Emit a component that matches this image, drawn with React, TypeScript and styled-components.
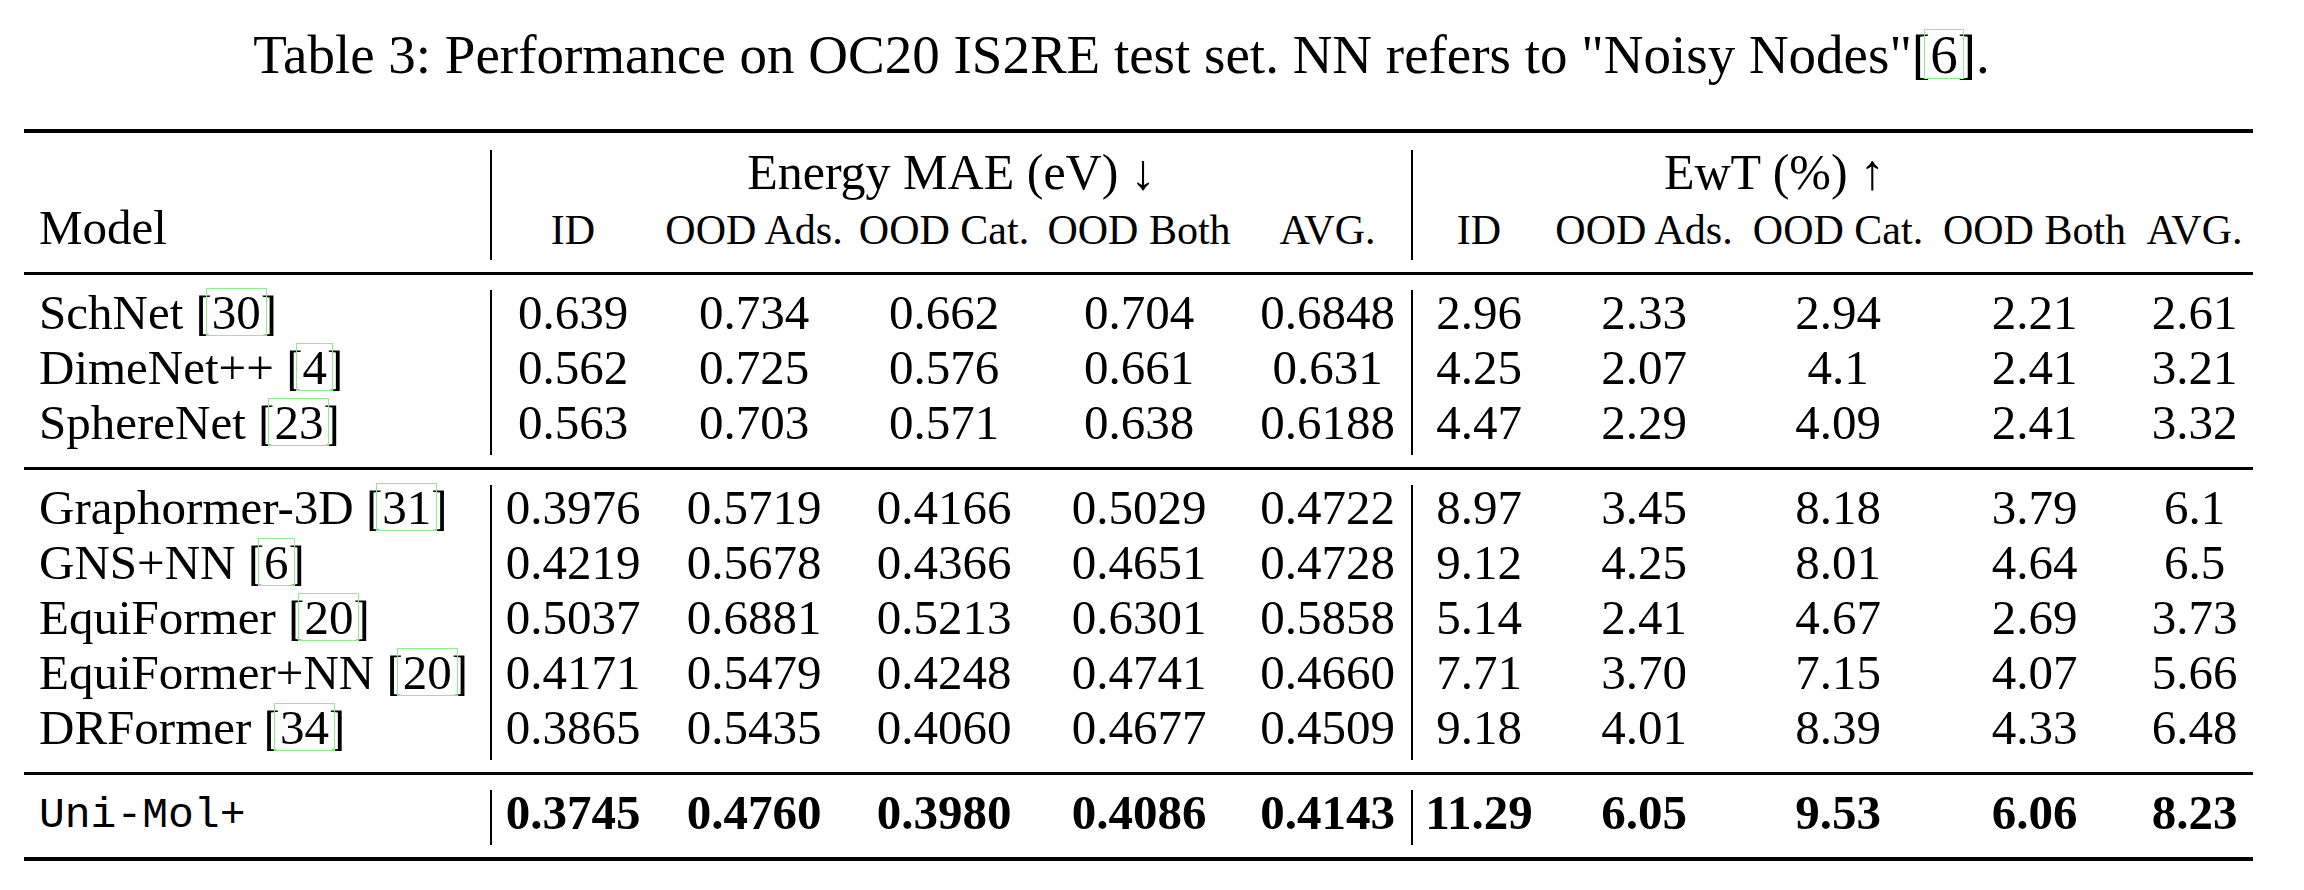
import React from 'react';
import styled, { createGlobalStyle, css } from 'styled-components';

const GlobalStyle = createGlobalStyle`
  html, body {
    margin: 0;
    padding: 0;
    background: #ffffff;
  }
  body {
    font-family: 'Liberation Serif', 'Times New Roman', serif;
    color: #000;
  }
`;

// column widths measured from the screenshot (model | energy x5 | ewt x5)
const COLUMNS = '466px 164px 200px 180px 210px 167px 134px 198px 190px 203px 117px';

const Page = styled.div`
  width: 2304px;
  height: 890px;
  overflow: hidden;
`;

const Caption = styled.div`
  width: 2229px;
  margin-left: 24px;
  padding: 27px 34px 0 0;
  box-sizing: border-box;
  font-size: 55px;
  line-height: 55px;
  text-align: center;
  white-space: nowrap;
`;

const Table = styled.div`
  width: 2229px;
  margin: 47px 0 0 24px;
`;

const Rule = styled.div<{ $heavy?: boolean }>`
  height: ${p => (p.$heavy ? '4px' : '3px')};
  background: #000;
`;

const Section = styled.div`
  padding: 15px 0 12px;
`;

const HeaderSection = styled(Section)`
  padding-top: 17px;
`;

const Grid = styled.div`
  display: grid;
  grid-template-columns: ${COLUMNS};
  grid-auto-rows: 55px;
`;

const Cell = styled.div<{
  $left?: boolean;
  $divider?: boolean;
  $bold?: boolean;
  $small?: boolean;
  $group?: boolean;
  $span?: number;
  $mono?: boolean;
}>`
  box-sizing: border-box;
  height: 55px;
  font-size: 49px;
  line-height: 45px;
  padding-bottom: 10px;
  white-space: nowrap;
  text-align: ${p => (p.$left ? 'left' : 'center')};
  padding-left: ${p => (p.$left ? '15px' : '0')};
  font-weight: ${p => (p.$bold ? 700 : 400)};
  ${p => p.$divider && css`border-left: 2px solid #000;`}
  ${p => p.$span && css`grid-column: span ${p.$span};`}
  ${p => p.$group && css`font-size: 50px;`}
  ${p =>
    p.$small &&
    css`
      font-size: 42px;
      padding-top: 3px;
      padding-bottom: 7px;
    `}
  ${p =>
    p.$mono &&
    css`
      font-family: 'Liberation Mono', 'Courier New', monospace;
      font-size: 43px;
      padding-top: 3px;
      padding-bottom: 7px;
    `}
`;

const CiteLink = styled.span<{ $caption?: boolean }>`
  position: relative;

  &::after {
    content: '';
    position: absolute;
    left: -6px;
    right: -6px;
    top: ${p => (p.$caption ? '5px' : '3px')};
    bottom: ${p => (p.$caption ? '6px' : '4px')};
    border: 1px solid #8fec8f;
    pointer-events: none;
  }
`;

type Row = {
  model: string;
  cite?: string;
  energy: string[];
  ewt: string[];
};

const baselines: Row[] = [
  { model: 'SchNet', cite: '30', energy: ['0.639', '0.734', '0.662', '0.704', '0.6848'], ewt: ['2.96', '2.33', '2.94', '2.21', '2.61'] },
  { model: 'DimeNet++', cite: '4', energy: ['0.562', '0.725', '0.576', '0.661', '0.631'], ewt: ['4.25', '2.07', '4.1', '2.41', '3.21'] },
  { model: 'SphereNet', cite: '23', energy: ['0.563', '0.703', '0.571', '0.638', '0.6188'], ewt: ['4.47', '2.29', '4.09', '2.41', '3.32'] },
];

const transformers: Row[] = [
  { model: 'Graphormer-3D', cite: '31', energy: ['0.3976', '0.5719', '0.4166', '0.5029', '0.4722'], ewt: ['8.97', '3.45', '8.18', '3.79', '6.1'] },
  { model: 'GNS+NN', cite: '6', energy: ['0.4219', '0.5678', '0.4366', '0.4651', '0.4728'], ewt: ['9.12', '4.25', '8.01', '4.64', '6.5'] },
  { model: 'EquiFormer', cite: '20', energy: ['0.5037', '0.6881', '0.5213', '0.6301', '0.5858'], ewt: ['5.14', '2.41', '4.67', '2.69', '3.73'] },
  { model: 'EquiFormer+NN', cite: '20', energy: ['0.4171', '0.5479', '0.4248', '0.4741', '0.4660'], ewt: ['7.71', '3.70', '7.15', '4.07', '5.66'] },
  { model: 'DRFormer', cite: '34', energy: ['0.3865', '0.5435', '0.4060', '0.4677', '0.4509'], ewt: ['9.18', '4.01', '8.39', '4.33', '6.48'] },
];

const ours: Row = {
  model: 'Uni-Mol+',
  energy: ['0.3745', '0.4760', '0.3980', '0.4086', '0.4143'],
  ewt: ['11.29', '6.05', '9.53', '6.06', '8.23'],
};

const subHeaders = ['ID', 'OOD Ads.', 'OOD Cat.', 'OOD Both', 'AVG.'];

const DataRow: React.FC<{ row: Row; bold?: boolean; mono?: boolean }> = ({ row, bold, mono }) => (
  <>
    <Cell $left $mono={mono}>
      {row.model}
      {row.cite && (
        <>
          {' '}[<CiteLink>{row.cite}</CiteLink>]
        </>
      )}
    </Cell>
    {row.energy.map((v, i) => (
      <Cell key={'e' + i} $divider={i === 0} $bold={bold}>
        {v}
      </Cell>
    ))}
    {row.ewt.map((v, i) => (
      <Cell key={'w' + i} $divider={i === 0} $bold={bold}>
        {v}
      </Cell>
    ))}
  </>
);

const App: React.FC = () => {
  return (
    <Page>
      <GlobalStyle />
      <Caption>
        Table 3: Performance on OC20 IS2RE test set. NN refers to "Noisy Nodes"[<CiteLink $caption>6</CiteLink>].
      </Caption>

      <Table>
        <Rule $heavy />
        <HeaderSection>
          <Grid>
            <Cell />
            <Cell $span={5} $divider $group>
              Energy MAE (eV) ↓
            </Cell>
            <Cell $span={4} $divider $group>
              EwT (%) ↑
            </Cell>
            <Cell />

            <Cell $left>Model</Cell>
            {subHeaders.map((h, i) => (
              <Cell key={'eh' + i} $small $divider={i === 0}>
                {h}
              </Cell>
            ))}
            {subHeaders.map((h, i) => (
              <Cell key={'wh' + i} $small $divider={i === 0}>
                {h}
              </Cell>
            ))}
          </Grid>
        </HeaderSection>
        <Rule />

        <Section>
          <Grid>
            {baselines.map(r => (
              <DataRow key={r.model} row={r} />
            ))}
          </Grid>
        </Section>
        <Rule />

        <Section>
          <Grid>
            {transformers.map(r => (
              <DataRow key={r.model} row={r} />
            ))}
          </Grid>
        </Section>
        <Rule />

        <Section>
          <Grid>
            <DataRow row={ours} bold mono />
          </Grid>
        </Section>
        <Rule $heavy />
      </Table>
    </Page>
  );
};

export default App;
